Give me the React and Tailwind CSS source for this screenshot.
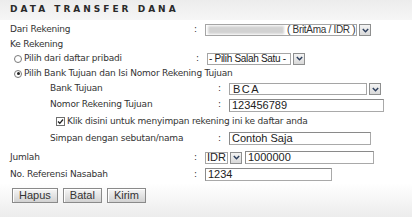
import React from "react";

const lab = { fontFamily: '"DejaVu Sans", Verdana, sans-serif', letterSpacing: "-0.2px" };
const arial = { fontFamily: '"Liberation Sans", Arial, sans-serif', letterSpacing: "0px" };

function Arrow() {
  return (
    <div className="w-[12px] h-[12px] border border-[#8e8f8f] bg-gradient-to-b from-[#f4f4f4] to-[#d9d9d9] flex items-center justify-center shrink-0">
      <svg width="7" height="5" viewBox="0 0 7 5">
        <path d="M0.8 1 L3.5 3.8 L6.2 1" fill="none" stroke="#2c3e5c" strokeWidth="1.4" />
      </svg>
    </div>
  );
}

function Select({ w, children }) {
  return (
    <div className="h-[12px] flex items-center gap-[2px] shrink-0" style={{ width: w }}>
      <div className="flex-1 min-w-0 h-[12px] border border-[#a5a5a5] bg-white flex items-center overflow-hidden whitespace-nowrap text-[10px] leading-none text-[#222]" style={arial}>
        {children}
      </div>
      <Arrow />
    </div>
  );
}

function Input({ w, value }) {
  return (
    <div className="h-[13px] shrink-0 border border-[#a9a9a9] border-t-[#8a8a8a] border-l-[#8a8a8a] bg-white flex items-center pl-[2px] whitespace-nowrap text-[11px] leading-none text-[#222]" style={{ ...arial, width: w }}>
      {value}
    </div>
  );
}

function Colon() {
  return <span className="w-[11px] shrink-0 text-[9px] text-[#333]">:</span>;
}

function Radio({ checked }) {
  return (
    <div className="w-[8px] h-[8px] rounded-full border border-[#7a7a7a] bg-white flex items-center justify-center shrink-0">
      {checked && <div className="w-[3px] h-[3px] rounded-full bg-[#222]" />}
    </div>
  );
}

function Btn({ children }) {
  return (
    <div className="h-[15px] px-[6px] border border-[#8a8a8a] bg-gradient-to-b from-[#f6f6f6] to-[#d2d2d2] flex items-center text-[11px] leading-none text-[#333] shadow-[inset_1px_1px_0_#fff]" style={arial}>
      {children}
    </div>
  );
}

export default function App() {
  return (
    <div className="w-[412px] h-[217px] bg-white overflow-hidden flex flex-col text-[9px] text-[#333] whitespace-nowrap" style={lab}>
      <div className="h-[20px] shrink-0 bg-gradient-to-b from-[#ececec] to-[#f6f6f6] flex items-center pl-[10px]">
        <span className="font-bold text-[9px] tracking-[3px] text-[#2a2a2a]">DATA TRANSFER DANA</span>
      </div>

      <div className="h-[16px] flex items-center pl-[10px] mt-[2px]">
        <span className="w-[184px] shrink-0">Dari Rekening</span>
        <Colon />
        <Select w="166px">
          <div className="w-[76px] h-[8px] ml-[2px] shrink-0 bg-[#d2d2d2] blur-[1px]" />
          <span className="ml-[3px] text-[#333] tracking-[-0.3px]">( BritAma / IDR )</span>
        </Select>
      </div>

      <div className="h-[13px] flex items-center pl-[10px]">
        <span>Ke Rekening</span>
      </div>

      <div className="h-[15px] flex items-center pl-[14px]">
        <Radio />
        <span className="w-[172px] shrink-0 ml-[2px]">Pilih dari daftar pribadi</span>
        <Colon />
        <Select w="98px">
          <span className="ml-[1px] tracking-[-0.3px]">- Pilih Salah Satu -</span>
        </Select>
      </div>

      <div className="h-[15px] flex items-center pl-[14px]">
        <Radio checked />
        <span className="ml-[2px]">Pilih Bank Tujuan dan Isi Nomor Rekening Tujuan</span>
      </div>

      <div className="h-[16px] flex items-center pl-[50px]">
        <span className="w-[168px] shrink-0">Bank Tujuan</span>
        <Colon />
        <Select w="152px">
          <span className="ml-[3px] tracking-[1.5px] text-[11px]">BCA</span>
        </Select>
      </div>

      <div className="h-[16px] flex items-center pl-[50px]">
        <span className="w-[168px] shrink-0">Nomor Rekening Tujuan</span>
        <Colon />
        <Input w="155px" value="123456789" />
      </div>

      <div className="h-[17px] flex items-center pl-[56px]">
        <div className="w-[9px] h-[9px] border border-[#6f6f6f] bg-white flex items-center justify-center shrink-0">
          <svg width="7" height="7" viewBox="0 0 7 7">
            <path d="M1 3.5 L2.8 5.3 L6 1.5" fill="none" stroke="#222" strokeWidth="1.3" />
          </svg>
        </div>
        <span className="ml-[2px]">Klik disini untuk menyimpan rekening ini ke daftar anda</span>
      </div>

      <div className="h-[17px] flex items-center pl-[50px]">
        <span className="w-[168px] shrink-0">Simpan dengan sebutan/nama</span>
        <Colon />
        <Input w="142px" value="Contoh Saja" />
      </div>

      <div className="h-[17px] flex items-center pl-[10px] mt-[2px]">
        <span className="w-[184px] shrink-0">Jumlah</span>
        <Colon />
        <Select w="37px">
          <span className="ml-[1px] text-[11px]">IDR</span>
        </Select>
        <div className="ml-[3px]">
          <Input w="129px" value="1000000" />
        </div>
      </div>

      <div className="h-[17px] flex items-center pl-[10px]">
        <span className="w-[184px] shrink-0">No. Referensi Nasabah</span>
        <Colon />
        <Input w="127px" value="1234" />
      </div>

      <div className="flex-1 bg-gradient-to-b from-white to-[#ececec] pl-[12px] pt-[5px] flex gap-[5px] items-start">
        <Btn>Hapus</Btn>
        <Btn>Batal</Btn>
        <Btn>Kirim</Btn>
      </div>
    </div>
  );
}
